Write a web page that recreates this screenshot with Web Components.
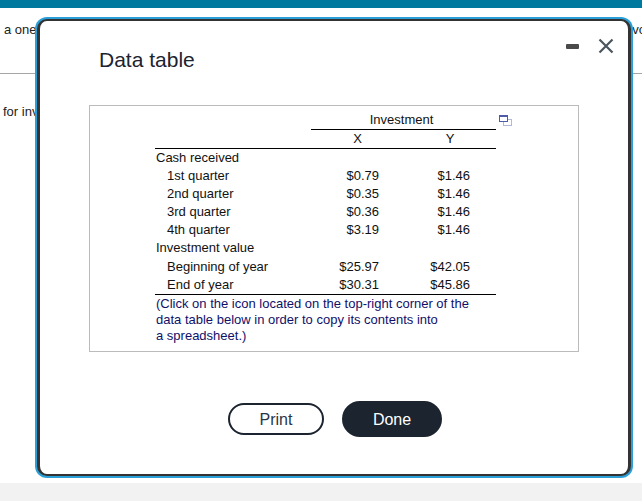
<!DOCTYPE html>
<html>
<head>
<meta charset="utf-8">
<title>Data table</title>
<style>
  html, body { margin: 0; height: 501px; overflow: hidden; background: #fff; font-family: "Liberation Sans", Arial, sans-serif; }
</style>
</head>
<body>
<page-backdrop></page-backdrop>
<data-modal heading="Data table">
  <data-table></data-table>
  <modal-button slot="actions" label="Print"></modal-button>
  <modal-button slot="actions" label="Done" primary></modal-button>
</data-modal>

<script>
class PageBackdrop extends HTMLElement {
  constructor() {
    super();
    this.attachShadow({ mode: 'open' });
    this.shadowRoot.innerHTML = `
      <style>
        :host {
          display: flex;
          flex-direction: column;
          height: 501px;
          font-size: 13px;
          color: #222;
        }
        .bar { height: 8px; background: #00799e; }
        .question {
          display: flex;
          justify-content: space-between;
          height: 66px;
          padding: 14px 0 0 4px;
          box-sizing: border-box;
          border-bottom: 1px solid #a6a6a6;
          line-height: 16px;
        }
        .question span:last-child { margin-right: -4px; }
        .part { flex: 1; padding: 30px 0 0 3px; line-height: 16px; }
        .footer { height: 18px; background: #f2f2f2; }
      </style>
      <div class="bar"></div>
      <div class="question"><span>a one</span><span>vo</span></div>
      <div class="part">for inv</div>
      <div class="footer"></div>
    `;
  }
}
customElements.define('page-backdrop', PageBackdrop);

class DataModal extends HTMLElement {
  constructor() {
    super();
    this.attachShadow({ mode: 'open' });
    this.shadowRoot.innerHTML = `
      <style>
        :host {
          position: absolute;
          left: 37px;
          top: 19px;
          width: 594px;
          height: 457px;
          box-sizing: border-box;
          display: flex;
          flex-direction: column;
          background: #fff;
          border: 3px solid #333;
          border-top-width: 2px;
          border-bottom-width: 2px;
          border-radius: 10px;
          box-shadow: 0 0 0 2px #2a9fd8;
        }
        header {
          display: flex;
          align-items: flex-start;
          justify-content: space-between;
          height: 84px;
          padding: 0 14px 0 59px;
          box-sizing: border-box;
        }
        h2 {
          margin: 26px 0 0;
          font-size: 21px;
          font-weight: 400;
          line-height: 26px;
          color: #1c2330;
        }
        .tools { display: flex; gap: 18px; margin-top: 17px; }
        .body { padding: 0 0 0 49px; }
        .actions {
          display: flex;
          align-items: center;
          justify-content: flex-start;
          gap: 18px;
          padding: 49px 0 0 188px;
        }
      </style>
      <header>
        <h2>${this.getAttribute('heading')}</h2>
        <div class="tools">
          <svg width="14" height="16" viewBox="0 0 14 16"><rect x="0" y="6" width="13" height="5" rx="1" fill="#4a4a4a"/></svg>
          <svg width="16" height="16" viewBox="0 0 16 16"><path d="M1.5 1.5 L14.5 14.5 M14.5 1.5 L1.5 14.5" stroke="#4a5560" stroke-width="2.2" fill="none"/></svg>
        </div>
      </header>
      <div class="body"><slot></slot></div>
      <div class="actions"><slot name="actions"></slot></div>
    `;
  }
}
customElements.define('data-modal', DataModal);

class DataTable extends HTMLElement {
  constructor() {
    super();
    this.attachShadow({ mode: 'open' });
    const rows = [
      ['Cash received', '', '', 'head'],
      ['1st quarter', '$0.79', '$1.46'],
      ['2nd quarter', '$0.35', '$1.46'],
      ['3rd quarter', '$0.36', '$1.46'],
      ['4th quarter', '$3.19', '$1.46'],
      ['Investment value', '', '', 'head'],
      ['Beginning of year', '$25.97', '$42.05', 'tall'],
      ['End of year', '$30.31', '$45.86', 'last']
    ];
    const body = rows.map(r => `
      <tr class="${r[3] || ''}">
        <td class="label">${r[0]}</td><td class="num">${r[1]}</td><td class="num y">${r[2]}</td>
      </tr>`).join('');
    this.shadowRoot.innerHTML = `
      <style>
        :host {
          display: block;
          width: 490px;
          height: 247px;
          box-sizing: border-box;
          border: 1px solid #bbb;
          padding: 5px 0 0 65px;
          position: relative;
          font-size: 13px;
          color: #111;
        }
        table { border-collapse: collapse; table-layout: fixed; width: 341px; }
        col.c1 { width: 156px; }
        col.c2 { width: 93px; }
        col.c3 { width: 92px; }
        td { padding: 0; height: 18px; line-height: 18px; white-space: nowrap; }
        .top td { height: 18px; text-align: center; }
        .line td.rule { border-bottom: 1px solid #000; padding-right: 4px; }
        .sub td { height: 18px; border-bottom: 1px solid #000; text-align: center; }
        .label { padding-left: 12px; }
        .head .label { padding-left: 1px; }
        .num { text-align: right; padding-right: 25px; }
        .num.y { padding-right: 26px; }
        .tall td { height: 20px; }
        .last td { height: 17px; line-height: 15px; vertical-align: top; border-bottom: 1px solid #000; }
        p {
          margin: 0;
          padding: 1px 0 0 1px;
          width: 320px;
          line-height: 16px;
          color: #10106a;
        }
        button {
          position: absolute;
          left: 409px;
          top: 9px;
          width: 13px;
          height: 11px;
          padding: 0;
          border: 0;
          background: none;
          line-height: 0;
        }
      </style>
      <table>
        <colgroup><col class="c1"><col class="c2"><col class="c3"></colgroup>
        <tr class="top line"><td></td><td class="rule" colspan="2">Investment</td></tr>
        <tr class="sub"><td></td><td>X</td><td>Y</td></tr>
        ${body}
      </table>
      <p>(Click on the icon located on the top-right corner of the data table below in order to copy its contents into<br>a spreadsheet.)</p>
      <button aria-label="Copy">
        <svg width="13" height="11" viewBox="0 0 13 11">
          <rect x="4.5" y="4.5" width="8" height="6" fill="#fff" stroke="#b3b8da"/>
          <rect x="0.5" y="0.5" width="8" height="6" fill="#fff" stroke="#4f5ba8"/>
          <rect x="0.5" y="0.5" width="8" height="1.5" fill="#4f5ba8"/>
        </svg>
      </button>
    `;
  }
}
customElements.define('data-table', DataTable);

class ModalButton extends HTMLElement {
  constructor() {
    super();
    this.attachShadow({ mode: 'open' });
    this.shadowRoot.innerHTML = `
      <style>
        :host { display: block; }
        button {
          display: block;
          width: 96px;
          height: 32px;
          box-sizing: border-box;
          border: 2px solid #1c2430;
          border-radius: 16px;
          background: #fff;
          color: #2a3648;
          font: 16px "Liberation Sans", Arial, sans-serif;
          padding: 1px 0 0;
        }
        :host([primary]) button {
          width: 100px;
          height: 36px;
          border-radius: 18px;
          background: #1c2430;
          color: #fff;
        }
      </style>
      <button>${this.getAttribute('label')}</button>
    `;
  }
}
customElements.define('modal-button', ModalButton);
</script>
</body>
</html>
